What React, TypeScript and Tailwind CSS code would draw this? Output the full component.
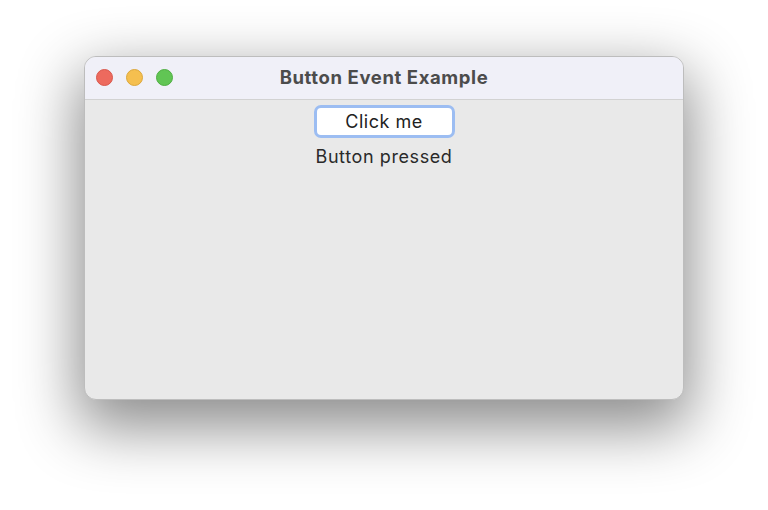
import { useState } from 'react';

export default function App() {
  const [pressed, setPressed] = useState(true);

  return (
    <div className="w-[768px] h-[510px] bg-white pt-[56px] pl-[84px] font-['Inter','Liberation_Sans',sans-serif]">
      {/* Window */}
      <div className="w-[600px] h-[344px] rounded-[12px] bg-[#e9e9e9] border border-[#bdbdbd] shadow-[0_22px_60px_6px_rgba(0,0,0,0.45)] overflow-hidden flex flex-col">
        {/* Title bar */}
        <div className="relative h-[43px] bg-[#f0f0f8] border-b border-[#d2d2d2] flex items-center justify-center shrink-0">
          <div className="absolute left-[11px] top-[12px] flex gap-[13px]">
            <div className="w-[17px] h-[17px] shrink-0 rounded-full bg-[#ed6a5e] border border-[#d9574c]" />
            <div className="w-[17px] h-[17px] shrink-0 rounded-full bg-[#f5bf4f] border border-[#dca73b]" />
            <div className="w-[17px] h-[17px] shrink-0 rounded-full bg-[#61c554] border border-[#4fae42]" />
          </div>
          <span className="text-[18.5px] font-bold text-[#4c4c4c] tracking-[0.6px]">Button Event Example</span>
        </div>

        {/* Content */}
        <div className="flex flex-col items-center pt-[5px]">
          <button
            onClick={() => setPressed(true)}
            className="w-[141px] h-[33px] rounded-[7px] bg-white border-[3px] border-[#9cbdf2] text-[18px] text-[#222] tracking-[0.5px] leading-none flex items-center justify-center"
          >
            Click me
          </button>
          <div className="mt-[7px] text-[18px] text-[#2a2a2a] tracking-[0.6px] leading-[24px]">
            {pressed ? 'Button pressed' : ''}
          </div>
        </div>
      </div>
    </div>
  );
}
